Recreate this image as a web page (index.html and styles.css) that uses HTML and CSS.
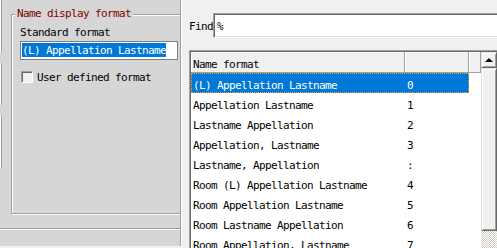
FILE: index.html
```html
<!DOCTYPE html>
<html>
<head>
<meta charset="utf-8">
<title>Name display format</title>
<link rel="stylesheet" href="styles.css">
</head>
<body>
	<div class="left">
		<div class="upper">
			<div class="edge">
				<span class="e1"></span>
				<span class="e2"></span>
				<span class="e3"></span>
			</div>
			<div class="main">
				<fieldset class="group">
					<legend>Name display format</legend>
					<div class="label">Standard format</div>
					<div class="field"><span class="sel">(L) Appellation Lastname</span></div>
					<div class="check">
						<span class="box"></span>
						<span>User defined format</span>
					</div>
				</fieldset>
			</div>
		</div>
		<div class="sep"></div>
	</div>

	<div class="right">
		<div class="find">
			<span class="find-label">Find</span>
			<div class="find-input">%</div>
		</div>
		<div class="list">
			<div class="list-body">
				<div class="head">
					<div class="hc hc1">Name format</div>
					<div class="hc hc2"></div>
					<div class="hc hc3"></div>
				</div>
				<div class="row selected"><span class="c1">(L) Appellation Lastname</span><span class="c2">0</span></div>
				<div class="row"><span class="c1">Appellation Lastname</span><span class="c2">1</span></div>
				<div class="row"><span class="c1">Lastname Appellation</span><span class="c2">2</span></div>
				<div class="row"><span class="c1">Appellation, Lastname</span><span class="c2">3</span></div>
				<div class="row"><span class="c1">Lastname, Appellation</span><span class="c2">:</span></div>
				<div class="row"><span class="c1">Room (L) Appellation Lastname</span><span class="c2">4</span></div>
				<div class="row"><span class="c1">Room Appellation Lastname</span><span class="c2">5</span></div>
				<div class="row"><span class="c1">Room Lastname Appellation</span><span class="c2">6</span></div>
				<div class="row"><span class="c1">Room Appellation, Lastname</span><span class="c2">7</span></div>
			</div>
			<div class="sb">
				<div class="sb-up raised"><span class="arrow"></span></div>
				<div class="sb-thumb raised"></div>
				<div class="sb-track"></div>
			</div>
		</div>
	</div>
</body>
</html>
```

FILE: styles.css
```css
* { box-sizing:border-box; }
body { margin:0; width:497px; height:248px; overflow:hidden; display:flex; background:#f0f0f0; color:#000; font:11px/14px "DejaVu Sans Mono", monospace; letter-spacing:-0.62px; }

/* left panel */
.left { flex:none; width:181px; height:246px; display:flex; flex-direction:column; background:#d6d6d6; border-right:1px solid #a0a0a0; overflow:hidden; }
.upper { display:flex; height:214px; flex:none; }
.edge { flex:none; width:2px; display:flex; flex-direction:column; }
.edge span { display:block; border-left:1px solid #fff; border-right:1px solid #a0a0a0; }
.e1 { height:53px; }
.e2 { height:42px; margin-top:10px; }
.e3 { height:53px; margin-top:10px; }
.main { flex:none; width:230px; margin-left:9px; }

.group { margin:9px 0 0; padding:7px 0 0 3px; height:205px; min-width:0; border:1px solid #a0a0a0; box-shadow:1px 1px 0 #fff, inset 1px 1px 0 #fff; }
.group legend { padding:0 2px; line-height:10px; color:#800000; background:#d6d6d6; }
.label { margin-left:5px; }
.field { margin:1px 0 0 5px; width:158px; height:19px; padding:1px; border:1px solid #7f7f7f; background:#fff; }
.sel { display:inline-block; vertical-align:top; height:14px; line-height:16px; background:#0078d7; color:#fff; }
.check { display:flex; align-items:flex-start; margin:11px 0 0 6px; }
.box { flex:none; width:12px; height:12px; margin-right:4px; border:1px solid; border-color:#a0a0a0 #fff #fff #a0a0a0; box-shadow:inset 1px 1px 0 #696969; background:#f0f0f0; }
.sep { flex:none; margin-top:14px; border-top:1px solid #a0a0a0; border-bottom:1px solid #fff; }

/* right panel */
.right { flex:1; min-width:0; overflow:hidden; padding:13px 0 0 7px; border-left:1px solid #fff; }
.find { display:flex; align-items:flex-start; height:25px; }
.find-label { padding-top:7px; }
.find-input { flex:none; width:320px; height:25px; padding:6px 0 0 3px; border:1px solid; border-color:#a0a0a0 #fff #fff #a0a0a0; box-shadow:inset 1px 1px 0 #696969, inset -1px -1px 0 #e3e3e3; background:#fff; }

.list { display:flex; margin-top:12px; width:310px; height:212px; padding:1px 0 0 1px; border:1px solid; border-color:#a0a0a0 #fff #fff #a0a0a0; box-shadow:inset 1px 1px 0 #696969; background:#fff; }
.list-body { flex:none; width:290px; overflow:hidden; }
.head { display:flex; height:21px; }
.hc { height:21px; padding:6px 0 0 2px; background:#f0f0f0; border-right:1px solid #a0a0a0; border-bottom:1px solid #a0a0a0; box-shadow:inset 1px 1px 0 #fff; white-space:nowrap; }
.hc1 { width:214px; }
.hc2 { width:64px; }
.hc3 { width:12px; }

.row { display:flex; width:278px; height:20px; padding-top:6px; white-space:nowrap; }
.c1 { width:214px; padding-left:2px; }
.c2 { padding-left:2px; }
.selected { background:#0078d7; color:#fff; outline:1px dotted #f7a11a; outline-offset:-1px; }

.sb { flex:none; width:16px; display:flex; flex-direction:column; }
.raised { background:#f0f0f0; border:1px solid; border-color:#e3e3e3 #696969 #696969 #e3e3e3; box-shadow:inset 1px 1px 0 #fff, inset -1px -1px 0 #a0a0a0; }
.sb-up { flex:none; height:16px; display:flex; align-items:center; justify-content:center; }
.arrow { width:0; height:0; border-left:4px solid transparent; border-right:4px solid transparent; border-bottom:4px solid #000; }
.sb-thumb { flex:none; height:163px; }
.sb-track { flex:1; background:repeating-conic-gradient(#d4d0c8 0 25%, #fff 0 50%) 0 0/2px 2px; }
```
